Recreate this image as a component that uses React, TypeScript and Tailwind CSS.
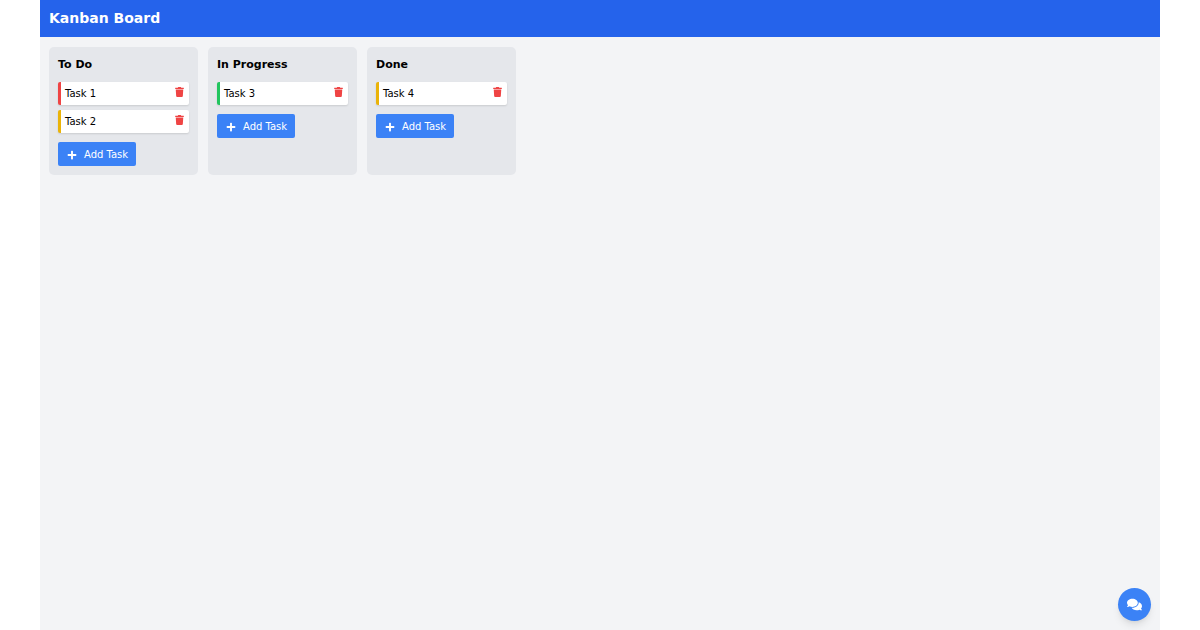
import { useState } from "react";
import { FaComments, FaPlus, FaTrash } from "react-icons/fa";

type Task = { id: number; title: string; accent: string };
type Column = { id: string; title: string; tasks: Task[] };

const INITIAL_COLUMNS: Column[] = [
  { id: "todo", title: "To Do", tasks: [
    { id: 1, title: "Task 1", accent: "border-[#ef4444]" },
    { id: 2, title: "Task 2", accent: "border-[#eab308]" },
  ] },
  { id: "progress", title: "In Progress", tasks: [
    { id: 3, title: "Task 3", accent: "border-[#22c55e]" },
  ] },
  { id: "done", title: "Done", tasks: [
    { id: 4, title: "Task 4", accent: "border-[#eab308]" },
  ] },
];

function TaskCard({ task, onDelete }: { task: Task; onDelete: () => void }) {
  return (
    <li className={`flex items-start justify-between rounded-[2px] border-l-[3px] bg-white py-[5px] pr-[5px] pl-1 shadow-[0_1px_2px_rgba(0,0,0,0.12)] ${task.accent}`}>
      <span className="leading-[13px]">{task.title}</span>
      <button type="button" onClick={onDelete} aria-label={`Delete ${task.title}`} className="text-[#ef4444]">
        <FaTrash className="h-[10px] w-[9px]" />
      </button>
    </li>
  );
}

function BoardColumn({ column, onAdd, onDelete }: {
  column: Column;
  onAdd: () => void;
  onDelete: (id: number) => void;
}) {
  return (
    <section className="w-[149px] shrink-0 rounded-[5px] bg-[#e5e7eb] p-[9px]">
      <h2 className="mb-2 text-[11px] leading-[18px] font-bold">{column.title}</h2>
      <ul className="flex flex-col gap-[5px]">
        {column.tasks.map((t) => <TaskCard key={t.id} task={t} onDelete={() => onDelete(t.id)} />)}
      </ul>
      <button type="button" onClick={onAdd}
        className="mt-[9px] flex h-6 items-center gap-[7px] rounded-[2px] bg-[#3b82f6] pr-2 pl-[9px] leading-[13px] text-white">
        <FaPlus className="mt-px size-[10px]" />
        Add Task
      </button>
    </section>
  );
}

export default function App() {
  const [columns, setColumns] = useState(INITIAL_COLUMNS);

  const addTask = (columnId: string) => {
    const id = Math.max(0, ...columns.flatMap((c) => c.tasks.map((t) => t.id))) + 1;
    const task = { id, title: `Task ${id}`, accent: "border-[#22c55e]" };
    setColumns(columns.map((c) => (c.id === columnId ? { ...c, tasks: [...c.tasks, task] } : c)));
  };

  const deleteTask = (id: number) =>
    setColumns(columns.map((c) => ({ ...c, tasks: c.tasks.filter((t) => t.id !== id) })));

  return (
    <div className="relative mx-10 min-h-screen bg-[#f3f4f6] font-['DejaVu_Sans',sans-serif] text-[10px] text-black">
      <header className="bg-[#2563eb] px-[9px] py-[9px] text-white">
        <h1 className="text-[14px] leading-[19px] font-bold">Kanban Board</h1>
      </header>
      <main className="flex gap-[10px] overflow-x-auto px-[9px] py-[10px]">
        {columns.map((c) => (
          <BoardColumn key={c.id} column={c} onAdd={() => addTask(c.id)} onDelete={deleteTask} />
        ))}
      </main>
      <button type="button" aria-label="Open chat"
        className="absolute right-[9px] bottom-[9px] flex size-[33px] items-center justify-center rounded-full bg-[#3b82f6] text-white shadow-[0_6px_9px_-2px_rgba(0,0,0,0.1),0_2px_4px_-2px_rgba(0,0,0,0.1)]">
        <FaComments className="size-[15px]" />
      </button>
    </div>
  );
}
